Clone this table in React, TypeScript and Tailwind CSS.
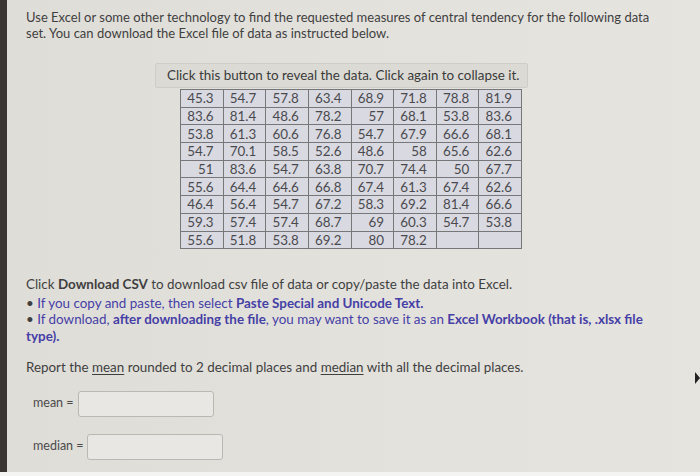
const rows: string[][] = [
  ["45.3", "54.7", "57.8", "63.4", "68.9", "71.8", "78.8", "81.9"],
  ["83.6", "81.4", "48.6", "78.2", "57", "68.1", "53.8", "83.6"],
  ["53.8", "61.3", "60.6", "76.8", "54.7", "67.9", "66.6", "68.1"],
  ["54.7", "70.1", "58.5", "52.6", "48.6", "58", "65.6", "62.6"],
  ["51", "83.6", "54.7", "63.8", "70.7", "74.4", "50", "67.7"],
  ["55.6", "64.4", "64.6", "66.8", "67.4", "61.3", "67.4", "62.6"],
  ["46.4", "56.4", "54.7", "67.2", "58.3", "69.2", "81.4", "66.6"],
  ["59.3", "57.4", "57.4", "68.7", "69", "60.3", "54.7", "53.8"],
  ["55.6", "51.8", "53.8", "69.2", "80", "78.2", "", ""],
];

function DataTable() {
  return (
    <table className="ml-[25px] mt-px w-[342px] table-fixed border-collapse border border-[#6f6f72]">
      <tbody>
        {rows.map((row, i) => (
          <tr key={i} className="h-[17.7px]">
            {row.map((v, j) => (
              <td
                key={j}
                className="border border-[#77777a] bg-[#d9d9e1] pr-[9px] text-right align-middle text-[13.4px] leading-[16px] text-[#4a4a4e]"
              >
                {v}
              </td>
            ))}
          </tr>
        ))}
      </tbody>
    </table>
  );
}

function Answer({ label, width }: { label: string; width: string }) {
  return (
    <div className="flex items-center pl-[7px]">
      <span className={`${width} text-[12.5px] text-[#4a4a4a]`}>{label}</span>
      <div className="h-[26px] w-[136px] rounded-[3px] border border-[#b9b8b3] bg-[#e8e7e3]" />
    </div>
  );
}

export default function App() {
  return (
    <div
      className="flex h-[476px] w-[700px] flex-col overflow-hidden bg-[#f2f1ee]"
      style={{ fontFamily: "Lato, 'Open Sans', sans-serif" }}
    >
      <div className="flex h-[472px]">
        <div className="w-[7px] bg-[#3a3432]" />
        <div className="relative flex-1 bg-gradient-to-r from-[#dfddd8] via-[#e3e1dc] to-[#e6e4df] pl-[19px] pt-[10px] text-[#3f3f3f]">
          <p className="w-[628px] text-[13px] leading-[15.5px]">
            Use Excel or some other technology to find the requested measures of central tendency for the following data
            set. You can download the Excel file of data as instructed below.
          </p>

          <div className="ml-[129px] mt-[22px] w-[373px]">
            <div className="flex h-[25px] items-center rounded-[2px] border border-[#cfcdc8] bg-[#dcdad5] pl-[11px] text-[13.4px] text-[#3a3a3a]">
              Click this button to reveal the data. Click again to collapse it.
            </div>
            <DataTable />
          </div>

          <p className="mt-[27px] text-[13.4px] leading-[16.5px]">
            Click <b className="font-bold">Download CSV</b> to download csv file of data or copy/paste the data into Excel.
          </p>
          <ul className="mt-[2px] w-[630px] text-[13.4px] leading-[16.5px] text-[#4540a6]">
            <li>
              <span className="text-[#3f3f3f]">• </span>If you copy and paste, then select{" "}
              <b className="font-bold">Paste Special and Unicode Text.</b>
            </li>
            <li>
              <span className="text-[#3f3f3f]">• </span>If download, <b className="font-bold">after downloading the file</b>, you
              may want to save it as an <b className="font-bold">Excel Workbook (that is, .xlsx file</b>{" "}
              <b className="font-bold">type).</b>
            </li>
          </ul>

          <p className="mt-[15px] text-[13.4px] leading-[16.5px]">
            Report the <span className="underline underline-offset-2">mean</span> rounded to 2 decimal places and{" "}
            <span className="underline underline-offset-2">median</span> with all the decimal places.
          </p>

          <div className="mt-[15px] flex flex-col gap-[17px]">
            <Answer label="mean =" width="w-[45px]" />
            <Answer label="median =" width="w-[54px]" />
          </div>

          <div className="absolute right-0 top-[372px] h-0 w-0 border-y-[6px] border-l-[5px] border-y-transparent border-l-[#222]" />
        </div>
      </div>
      <div className="h-[4px] bg-[#f4f4f2]" />
    </div>
  );
}
